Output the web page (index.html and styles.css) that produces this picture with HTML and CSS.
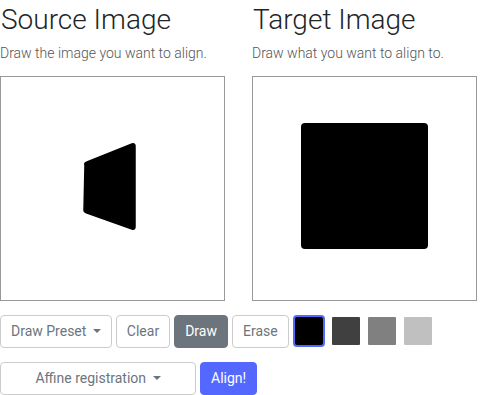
FILE: index.html
```html
<!DOCTYPE html>
<html lang="en">
<head>
    <meta charset="UTF-8">
    <title>Image Alignment</title>
    <link rel="stylesheet" href="styles.css">
</head>
<body>
    <div class="panes">
        <div class="pane">
            <h1>Source Image</h1>
            <p class="hint">Draw the image you want to align.</p>
            <div class="canvas">
                <svg width="223" height="223" viewBox="0 0 223 223">
                    <path d="M84 88 Q83 86 86 85 L131 67 Q134 66 134 69 L134 150 Q134 153 131 152 L86 136 Q83 135 83 133 Z" fill="#000" stroke="#000" stroke-width="1.5" stroke-linejoin="round"/>
                </svg>
            </div>
        </div>
        <div class="pane">
            <h1>Target Image</h1>
            <p class="hint">Draw what you want to align to.</p>
            <div class="canvas">
                <svg width="223" height="223" viewBox="0 0 223 223">
                    <rect x="48" y="46" width="127" height="126" rx="4" fill="#000"/>
                </svg>
            </div>
        </div>
    </div>

    <div class="toolbar">
        <button class="btn">Draw Preset <span class="caret"></span></button>
        <button class="btn">Clear</button>
        <button class="btn active">Draw</button>
        <button class="btn">Erase</button>
        <button class="swatch selected" style="background: #000;"></button>
        <button class="swatch" style="background: #404040;"></button>
        <button class="swatch" style="background: #808080;"></button>
        <button class="swatch" style="background: #c0c0c0;"></button>
    </div>

    <div class="toolbar">
        <button class="btn wide">Affine registration <span class="caret"></span></button>
        <button class="btn primary">Align!</button>
    </div>
</body>
</html>
```

FILE: styles.css
```css
body {
    font-family: Roboto, sans-serif;
    margin: 0;
    padding: 0;
    background: #fff;
    color: #212529;
}
.panes {
    display: flex;
    gap: 27px;
}
.pane {
    width: 225px;
}
h1 {
    font-size: 28px;
    font-weight: 300;
    line-height: 1.2;
    margin: 3px 0 0 1px;
}
.hint {
    font-size: 14px;
    font-weight: 300;
    color: #555;
    margin: 6px 0 0 0;
    line-height: 20px;
}
.canvas {
    margin-top: 13px;
    width: 223px;
    height: 223px;
    border: 1px solid #999;
}
.canvas svg {
    display: block;
}
.toolbar {
    display: flex;
    align-items: center;
    gap: 4px;
    margin-top: 14px;
}
.toolbar + .toolbar {
    margin-top: 14px;
}
.btn {
    font-family: Roboto, sans-serif;
    font-size: 14px;
    color: #6c757d;
    background: #fff;
    border: 1px solid #ccc;
    border-radius: 4px;
    height: 33px;
    padding: 0 10px;
    cursor: pointer;
}
.btn.active {
    background: #6c757d;
    border-color: #6c757d;
    color: #fff;
}
.btn.wide {
    width: 196px;
}
.btn.primary {
    background: #5468ff;
    border-color: #5468ff;
    color: #fff;
}
.caret {
    display: inline-block;
    margin-left: 3px;
    vertical-align: 3px;
    border-top: 4px solid;
    border-left: 4px solid transparent;
    border-right: 4px solid transparent;
}
.swatch {
    width: 28px;
    height: 28px;
    border: none;
    padding: 0;
    margin-left: 4px;
    border-radius: 1px;
}
.swatch.selected {
    width: 32px;
    height: 32px;
    margin-left: 0;
    margin-right: -1px;
    border: 2px solid #5468ff;
    border-radius: 4px;
}
```
